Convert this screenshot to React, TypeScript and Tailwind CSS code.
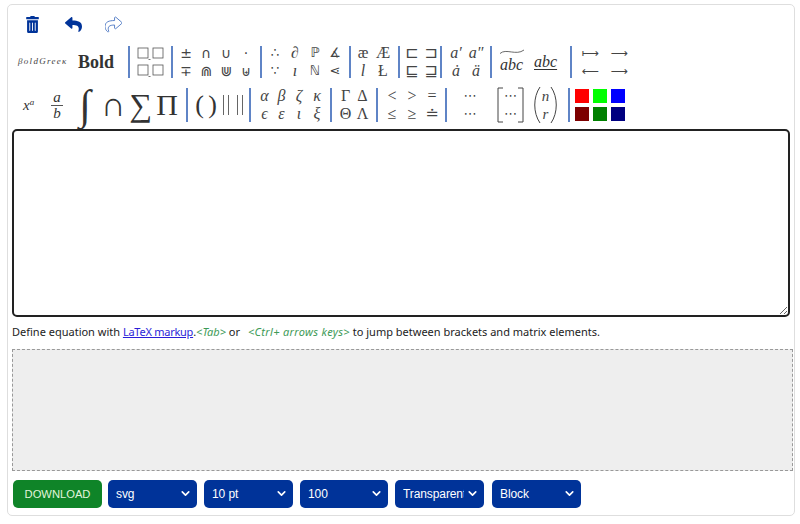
import { ChevronDown } from "lucide-react";
import { FaReply, FaTrashAlt } from "react-icons/fa";

const SERIF = "font-['Liberation_Serif','DejaVu_Serif',serif]";
const MATH = "font-['DejaVu_Sans','Liberation_Serif',serif]";

function Sep({ className = "" }: { className?: string }) {
  return <div className={`h-[32px] w-[2px] shrink-0 bg-[#5f84c6] ${className}`} />;
}

/** Two symbols stacked, as in the latex toolbar sprites */
function Pair({ top, bottom, className = "w-[20px]" }: { top: React.ReactNode; bottom: React.ReactNode; className?: string }) {
  return (
    <div className={`flex h-[34px] shrink-0 flex-col items-center justify-between leading-[16px] text-[#444] ${className}`}>
      <span className="h-[16px] whitespace-nowrap">{top}</span>
      <span className="h-[16px] whitespace-nowrap">{bottom}</span>
    </div>
  );
}

function Boxes() {
  return (
    <svg width="28" height="32" viewBox="0 0 28 32" fill="none" stroke="#555" strokeWidth="0.8" className="shrink-0">
      <rect x="1" y="2" width="10" height="10" />
      <rect x="16" y="2" width="10" height="10" />
      <rect x="1" y="19" width="10" height="10" />
      <rect x="16" y="19" width="10" height="10" />
      <path d="M11.500 13.500h2M11.500 30.500h2" />
    </svg>
  );
}

function Bracket({ flip = false }: { flip?: boolean }) {
  return (
    <svg width="7" height="36" viewBox="0 0 7 36" fill="none" stroke="#444" strokeWidth="1" className="shrink-0">
      <path d={flip ? "M1 1h5v34H1" : "M6 1H1v34h5"} />
    </svg>
  );
}

function Paren({ flip = false }: { flip?: boolean }) {
  return (
    <svg width="8" height="38" viewBox="0 0 8 38" fill="none" stroke="#444" strokeWidth="1" className="shrink-0">
      <path d={flip ? "M1 1c7 10 7 26 0 36" : "M7 1C0 11 0 27 7 37"} />
    </svg>
  );
}

function Norm() {
  return <span className="h-[20px] w-[6px] shrink-0 border-x border-[#666]" />;
}

function Swatches() {
  const colors = [
    "bg-[#ff0000]",
    "bg-[#00ff00]",
    "bg-[#0000ff]",
    "bg-[#7d0000]",
    "bg-[#008000]",
    "bg-[#000080]",
  ];
  return (
    <div className="grid shrink-0 grid-cols-[14px_14px_14px] gap-x-[4px] gap-y-[4px]">
      {colors.map((c) => (
        <span key={c} className={`h-[14px] w-[14px] ${c}`} />
      ))}
    </div>
  );
}

function Pick({ value, className = "" }: { value: string; className?: string }) {
  return (
    <div className={`relative h-[28px] shrink-0 ${className}`}>
      <select
        defaultValue={value}
        className="h-full w-full appearance-none rounded-[5px] bg-[#003399] pl-[8px] pr-[20px] font-['Liberation_Sans',sans-serif] text-[12px] tracking-[-0.1px] text-white outline-none"
      >
        <option>{value}</option>
      </select>
      <ChevronDown
        size={13}
        strokeWidth={3}
        className="pointer-events-none absolute right-[5px] top-[7px] text-white"
      />
    </div>
  );
}

export default function App() {
  return (
    <div className="h-[524px] w-[800px] overflow-hidden bg-white pl-[7px] pr-[5px] pt-[4px]">
      <div className="flex h-[512px] flex-col rounded-[5px] border border-[#dedede] pl-[4px] pr-[4px]">
        {/* undo / redo bar */}
        <div className="flex h-[38px] shrink-0 items-center pl-[12px]">
          <FaTrashAlt size={17} className="scale-x-[0.85] text-[#003399]" />
          <FaReply size={17} className="ml-[24px] text-[#003399]" />
          <FaReply size={17} fill="none" stroke="#4f78c4" strokeWidth={28} className="ml-[23px] -scale-x-100" />
        </div>

        {/* first symbol row */}
        <div className={`mt-[1px] flex h-[36px] shrink-0 items-center ${SERIF}`}>
          <span className="ml-[6px] w-[52px] shrink-0 whitespace-nowrap text-[9px] italic tracking-[1.3px] text-[#444]">βoldGreeκ</span>
          <span className="ml-[8px] w-[41px] shrink-0 whitespace-nowrap text-[18px] font-bold leading-none text-[#333]">Bold</span>
          <Sep className="ml-[9px]" />
          <div className="ml-[7px]">
            <Boxes />
          </div>
          <Sep className="ml-[6px]" />
          <div className={`ml-[3px] flex text-[14px] ${MATH}`}>
            <Pair top="±" bottom="∓" />
            <Pair top="∩" bottom="⋒" />
            <Pair top="∪" bottom="⋓" />
            <Pair top="·" bottom="⊎" />
          </div>
          <Sep className="ml-[4px]" />
          <div className="ml-[3px] flex text-[16px]">
            <Pair top="∴" bottom="∵" className={`w-[20px] text-[13px] ${MATH}`} />
            <Pair top={<i>∂</i>} bottom={<i>ı</i>} />
            <Pair top="ℙ" bottom="ℕ" className={`w-[20px] text-[13px] ${MATH}`} />
            <Pair top="∡" bottom="⋖" className={`w-[20px] text-[13px] ${MATH}`} />
          </div>
          <Sep className="ml-[4px]" />
          <div className="ml-[2px] flex text-[16px]">
            <Pair top="æ" bottom={<i>l</i>} />
            <Pair top="Æ" bottom="Ł" />
          </div>
          <Sep className="ml-[5px]" />
          <div className={`ml-[2px] flex text-[16px] ${MATH}`}>
            <Pair top="⊏" bottom="⊑" />
            <Pair top="⊐" bottom="⊒" className="w-[18px]" />
          </div>
          <Sep />
          <div className="ml-[4px] flex text-[16px] italic">
            <Pair top="a′" bottom="ȧ" />
            <Pair top="a″" bottom="ä" />
          </div>
          <Sep className="ml-[4px]" />
          <div className="relative ml-[8px] w-[24px] shrink-0 pt-[5px] text-[16px] italic leading-none text-[#333]">
            abc
            <svg width="24" height="6" viewBox="0 0 24 6" className="absolute left-0 top-[-3px]" fill="none" stroke="#444" strokeWidth="0.8">
              <path d="M0 4.500C6 -1 16 7 24 1" />
            </svg>
          </div>
          <span className="ml-[10px] w-[25px] shrink-0 text-[16px] italic leading-none text-[#333] underline underline-offset-2">abc</span>
          <Sep className="ml-[11px]" />
          <div className={`ml-[8px] flex text-[12px] ${MATH}`}>
            <Pair top="⟼" bottom="⟵" />
            <Pair top="⟶" bottom="⟶" className="ml-[9px] w-[20px]" />
          </div>
        </div>

        {/* second symbol row */}
        <div className={`mt-[5px] flex h-[40px] shrink-0 items-center text-[#333] ${SERIF}`}>
          <span className="ml-[11px] w-[18px] shrink-0 text-[15px] italic">
            x<sup className="text-[9px]">a</sup>
          </span>
          <div className="ml-[10px] flex w-[12px] shrink-0 flex-col items-center text-[15px] italic leading-[15px]">
            <span>a</span>
            <span className="h-px w-full bg-[#555]" />
            <span>b</span>
          </div>
          <span className="ml-[13px] w-[18px] shrink-0 text-center text-[42px] italic leading-none">∫</span>
          <span className="ml-[5px] w-[28px] shrink-0 text-center text-[34px] leading-none">∩</span>
          <span className="w-[28px] shrink-0 text-center text-[32px] leading-none">∑</span>
          <span className="w-[24px] shrink-0 text-center text-[30px] leading-none">Π</span>
          <Sep className="ml-[7px] h-[34px]" />
          <span className="ml-[5px] w-[13px] shrink-0 text-center text-[26px] leading-none">(</span>
          <span className="w-[13px] shrink-0 text-center text-[26px] leading-none">)</span>
          <div className="flex w-[28px] shrink-0 justify-around">
            <Norm />
            <Norm />
          </div>
          <Sep className="ml-[2px] h-[34px]" />
          <div className="ml-[5px] flex text-[16px] italic">
            <Pair top="α" bottom="ϵ" className="w-[17px]" />
            <Pair top="β" bottom="ε" className="w-[17px]" />
            <Pair top="ζ" bottom="ɩ" className="w-[18px]" />
            <Pair top="κ" bottom="ξ" className="w-[18px]" />
          </div>
          <Sep className="ml-[4px] h-[34px]" />
          <div className="ml-[5px] flex text-[16px]">
            <Pair top="Γ" bottom="Θ" className="w-[17px]" />
            <Pair top="Δ" bottom="Λ" className="w-[17px]" />
          </div>
          <Sep className="ml-[5px] h-[34px]" />
          <div className="ml-[4px] flex text-[16px]">
            <Pair top="<" bottom="≤" />
            <Pair top=">" bottom="≥" />
            <Pair top="=" bottom="≐" />
          </div>
          <Sep className="ml-[3px] h-[34px]" />
          <div className={`ml-[13px] flex text-[13px] ${MATH}`}>
            <Pair top="⋯" bottom="⋯" />
          </div>
          <div className="ml-[17px] flex items-center">
            <Bracket />
            <Pair top="⋯" bottom="⋯" className={`w-[13px] text-[13px] ${MATH}`} />
            <Bracket flip />
          </div>
          <div className="ml-[9px] flex items-center">
            <Paren />
            <Pair top="n" bottom="r" className="w-[9px] text-[15px] italic" />
            <Paren flip />
          </div>
          <Sep className="ml-[10px] h-[34px]" />
          <div className="ml-[5px]">
            <Swatches />
          </div>
        </div>

        <textarea className="mt-[4px] block h-[188px] w-[778px] shrink-0 rounded-[5px] border-2 border-[#222] outline-none" />

        <p className="mt-[7px] h-[16px] shrink-0 whitespace-nowrap font-['Noto_Sans',sans-serif] text-[11px] leading-[16px] text-[#222]">
          Define equation with{" "}
          <a href="#" className="tracking-[-0.25px] text-[#2a1ed8] underline">
            LaTeX markup
          </a>
          .<i className="text-[#3d9a57]">&lt;Tab&gt;</i> or{" "}
          <i className="ml-[5px] tracking-[0.33px] text-[#3d9a57]">&lt;Ctrl+ arrows keys&gt;</i> to jump between brackets and matrix elements.
        </p>

        <div className="mt-[9px] h-[122px] w-[781px] shrink-0 border border-dashed border-[#999] bg-[#eeeeee]" />

        <div className="mt-[9px] flex shrink-0 items-center">
          <button
            type="button"
            className="ml-[1px] h-[28px] w-[89px] shrink-0 rounded-[5px] bg-[#0f8428] font-['Liberation_Sans',sans-serif] text-[11.2px] text-[#e2f4dc]"
          >
            DOWNLOAD
          </button>
          <Pick value="svg" className="ml-[6px] w-[89px]" />
          <Pick value="10 pt" className="ml-[7px] w-[89px]" />
          <Pick value="100" className="ml-[7px] w-[88px]" />
          <Pick value="Transparent" className="ml-[7px] w-[89px]" />
          <Pick value="Block" className="ml-[8px] w-[89px]" />
        </div>
      </div>
    </div>
  );
}
